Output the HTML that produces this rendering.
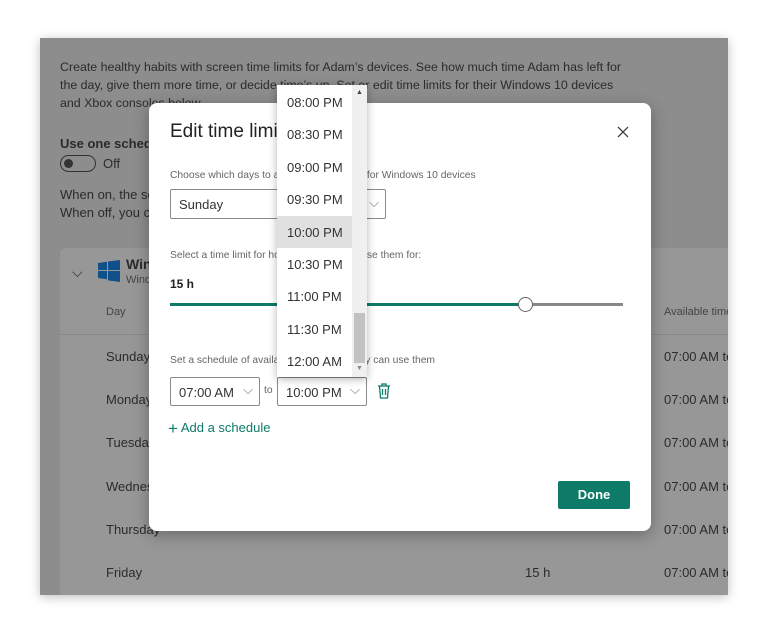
<!DOCTYPE html>
<html><head><meta charset="utf-8"><style>
*{box-sizing:border-box;margin:0;padding:0}
body{width:768px;height:634px;background:#fff;font-family:"Liberation Sans",sans-serif;position:relative;overflow:hidden}
.bg{position:absolute;left:40px;top:38px;width:688px;height:557px;background:#8d8d8d;overflow:hidden;box-shadow:0 2px 10px rgba(0,0,0,.25)}
.t{position:absolute;color:#2b2b2b;font-size:13px;white-space:nowrap}
.card{position:absolute;left:20px;top:210px;width:700px;height:400px;background:#979797;border-radius:6px}
.modal{position:absolute;left:149px;top:103px;width:502px;height:428px;background:#fff;border-radius:8px;box-shadow:0 4px 16px rgba(0,0,0,.3)}
.m{position:absolute;white-space:nowrap}
.lbl{font-size:10.3px;color:#666}
.sel{position:absolute;border:1px solid #8a8a8a;border-radius:2px;background:#fff;font-size:13px;color:#333}
.dd{position:absolute;left:277px;top:85px;width:90px;height:292px;background:#fff;box-shadow:0 2px 8px rgba(0,0,0,.3)}
.it{position:absolute;left:10px;font-size:13px;color:#333}
</style></head><body>
<div class="bg">
<div class="t" style="left:20px;top:20px;line-height:18px;font-size:12.4px">Create healthy habits with screen time limits for Adam’s devices. See how much time Adam has left for<br>the day, give them more time, or decide time’s up. Set or edit time limits for their Windows 10 devices<br>and Xbox consoles below.</div>
<div class="t" style="left:20px;top:98px;font-weight:bold">Use one schedule</div>
<div style="position:absolute;left:20px;top:117px;width:36px;height:17px;border:1px solid #333;border-radius:9px"><div style="position:absolute;left:3px;top:3px;width:9px;height:9px;border-radius:50%;background:#333"></div></div>
<div class="t" style="left:63px;top:118px">Off</div>
<div class="t" style="left:20px;top:148px;line-height:18px">When on, the se<br>When off, you c</div>
<div class="card">
<div class="t" style="left:12px;top:16px;font-size:14px">⌵</div>
<svg style="position:absolute;left:38px;top:12px" width="22" height="22" viewBox="0 0 22 22"><path d="M0 3l9-1.3V10H0zM10 1.5L22 0v10H10zM0 11h9v8.3L0 18zM10 11h12v11l-12-1.6z" fill="#0f4f8a"/></svg>
<div class="t" style="left:66px;top:8px;font-weight:bold;font-size:14px">Win</div>
<div class="t" style="left:66px;top:26px;font-size:11px;color:#444">Wind</div>
<div class="t" style="left:46px;top:58px;font-size:11px;color:#444">Day</div>
<div class="t" style="left:604px;top:58px;font-size:11px;color:#444">Available time</div>
<div style="position:absolute;left:0;top:86px;width:700px;height:1px;background:#888"></div>
<div class="t" style="left:46px;top:101px">Sunday</div><div class="t" style="left:604px;top:101px">07:00 AM to</div>
<div class="t" style="left:46px;top:144px">Monday</div><div class="t" style="left:604px;top:144px">07:00 AM to</div>
<div class="t" style="left:46px;top:187px">Tuesday</div><div class="t" style="left:604px;top:187px">07:00 AM to</div>
<div class="t" style="left:46px;top:231px">Wednesday</div><div class="t" style="left:604px;top:231px">07:00 AM to</div>
<div class="t" style="left:46px;top:274px">Thursday</div><div class="t" style="left:604px;top:274px">07:00 AM to</div>
<div class="t" style="left:46px;top:317px">Friday</div><div class="t" style="left:465px;top:317px">15 h</div><div class="t" style="left:604px;top:317px">07:00 AM to</div>
</div>
</div>
<div class="modal">
<div class="m" style="left:21px;top:18px;font-size:19px;color:#222">Edit time limits</div>
<svg style="position:absolute;left:468px;top:23px" width="12" height="12"><path d="M1 1l10 10M11 1L1 11" stroke="#444" stroke-width="1.3"/></svg>
<div class="m lbl" style="left:21px;top:67px">Choose which days to apply these limits to for Windows 10 devices</div>
<div class="sel" style="left:21px;top:86px;width:216px;height:30px;padding:7px 8px">Sunday<span style="position:absolute;right:6px;top:5px;color:#777">⌵</span></div>
<div class="m lbl" style="left:21px;top:147px">Select a time limit for how long Adam can use them for:</div>
<div class="m" style="left:21px;top:174px;font-size:12px;font-weight:bold;color:#222">15 h</div>
<div style="position:absolute;left:21px;top:200px;width:356px;height:3px;background:#0e7a68"></div>
<div style="position:absolute;left:377px;top:200px;width:97px;height:3px;background:#888"></div>
<div style="position:absolute;left:369px;top:194px;width:15px;height:15px;border-radius:50%;background:#fff;border:1.5px solid #666"></div>
<div class="m lbl" style="left:21px;top:252px">Set a schedule of available times when they can use them</div>
<div class="sel" style="left:21px;top:274px;width:90px;height:29px;padding:7px 8px">07:00 AM<span style="position:absolute;right:6px;top:4px;color:#777">⌵</span></div>
<div class="m lbl" style="left:115px;top:282px">to</div>
<div class="sel" style="left:128px;top:274px;width:90px;height:29px;padding:7px 8px">10:00 PM<span style="position:absolute;right:6px;top:4px;color:#777">⌵</span></div>
<svg style="position:absolute;left:228px;top:280px" width="14" height="16" viewBox="0 0 14 16"><path d="M1 3h12M5 3V1h4v2M2.5 3l1 12h7l1-12M5.5 6v6M8.5 6v6" fill="none" stroke="#0e7a68" stroke-width="1.3"/></svg>
<div class="m" style="left:19px;top:316px;font-size:13px;color:#0e7a68"><span style="font-size:17px;vertical-align:-2px">+</span> Add a schedule</div>
<div style="position:absolute;left:409px;top:378px;width:72px;height:28px;background:#0e7a68;border-radius:2px;color:#fff;font-size:13px;font-weight:bold;text-align:center;line-height:28px">Done</div>
</div>
<div class="dd">
<div style="position:absolute;left:0;top:131px;width:75px;height:32px;background:#e0e0e0"></div>
<div style="position:absolute;left:75px;top:0;width:15px;height:292px;background:#f0f0f0"></div>
<div style="position:absolute;left:77px;top:228px;width:11px;height:50px;background:#c2c2c2"></div>
<div style="position:absolute;left:79px;top:4px;font-size:7px;color:#444">▲</div>
<div style="position:absolute;left:79px;top:280px;font-size:7px;color:#888">▼</div>
<div class="it" style="top:10px">08:00 PM</div>
<div class="it" style="top:42px">08:30 PM</div>
<div class="it" style="top:75px">09:00 PM</div>
<div class="it" style="top:107px">09:30 PM</div>
<div class="it" style="top:140px">10:00 PM</div>
<div class="it" style="top:172px">10:30 PM</div>
<div class="it" style="top:204px">11:00 PM</div>
<div class="it" style="top:237px">11:30 PM</div>
<div class="it" style="top:269px">12:00 AM</div>
</div>
</body></html>
